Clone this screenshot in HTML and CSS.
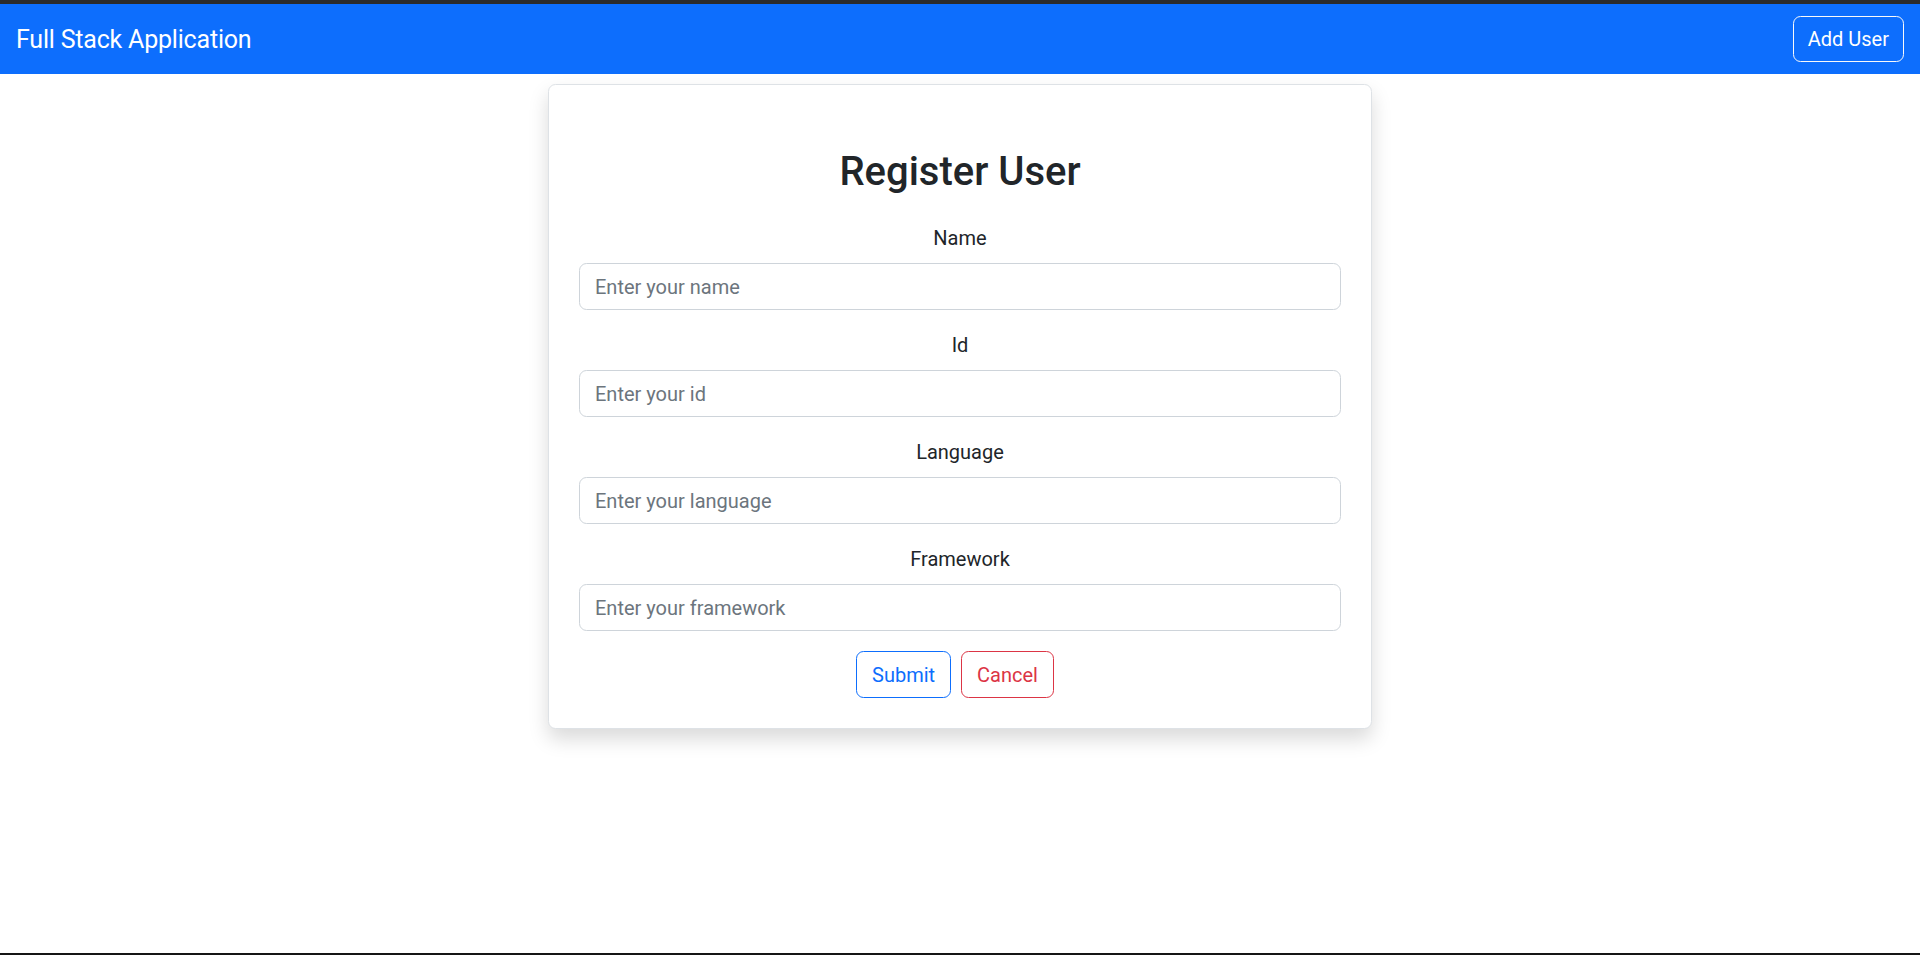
FILE: index.html
```html
<!DOCTYPE html>
<html lang="en">
<head>
<meta charset="utf-8">
<title>Full Stack Application</title>
<link rel="stylesheet" href="styles.css">
</head>
<body>
<div class="page">
  <div class="top-strip"></div>
  <nav class="navbar">
    <span class="brand">Full Stack Application</span>
    <button class="btn btn-light-outline">Add User</button>
  </nav>
  <main class="main">
    <div class="card">
      <h2 class="title">Register User</h2>
      <div class="group">
        <label class="label" for="name">Name</label>
        <input class="input" id="name" type="text" placeholder="Enter your name">
      </div>
      <div class="group">
        <label class="label" for="id">Id</label>
        <input class="input" id="id" type="text" placeholder="Enter your id">
      </div>
      <div class="group">
        <label class="label" for="language">Language</label>
        <input class="input" id="language" type="text" placeholder="Enter your language">
      </div>
      <div class="group">
        <label class="label" for="framework">Framework</label>
        <input class="input" id="framework" type="text" placeholder="Enter your framework">
      </div>
      <div class="actions">
        <button class="btn btn-primary-outline">Submit</button>
        <button class="btn btn-danger-outline cancel">Cancel</button>
      </div>
    </div>
  </main>
  <div class="bottom-strip"></div>
</div>
</body>
</html>
```
FILE: styles.css
```css
* { box-sizing: border-box; }
html, body { margin: 0; padding: 0; }
body {
  font-family: Roboto, "Liberation Sans", Arial, sans-serif;
  color: #212529;
  background: #fff;
  font-size: 20px;
  line-height: 30px;
}
.page {
  height: 955px;
  display: flex;
  flex-direction: column;
  overflow: hidden;
}
.top-strip { height: 4px; background: #2b2b2b; flex: none; }
.bottom-strip { height: 2px; background: #151515; flex: none; }
.navbar {
  flex: none;
  height: 70px;
  background: #0d6efd;
  display: flex;
  align-items: center;
  justify-content: space-between;
  padding: 0 16px;
}
.brand {
  color: #fff;
  font-size: 25px;
  line-height: 37px;
  letter-spacing: -0.2px;
}
.btn {
  font-family: inherit;
  font-size: 20px;
  line-height: 30px;
  height: 47px;
  padding: 0 15px;
  border-radius: 7.5px;
  background: transparent;
  border: 1px solid;
  cursor: pointer;
  white-space: nowrap;
}
.btn-light-outline {
  color: #fff;
  border-color: #f8f9fa;
  height: 46px;
  padding: 0 14px;
}
.main {
  flex: 1;
  display: flex;
  justify-content: center;
  align-items: flex-start;
  padding-top: 10px;
}
.card {
  width: 824px;
  border: 1px solid #dee2e6;
  border-radius: 7.5px;
  padding: 30px 30px 30px;
  box-shadow: 0 10px 20px rgba(0, 0, 0, 0.15);
  background: #fff;
}
.title {
  margin: 33px 0 27px;
  text-align: center;
  font-size: 40px;
  line-height: 48px;
  font-weight: 500;
  color: #212529;
}
.group {
  margin-bottom: 20px;
  display: flex;
  flex-direction: column;
}
.label {
  text-align: center;
  margin-bottom: 10px;
  line-height: 30px;
}
.input {
  height: 47px;
  padding: 0 15px;
  font-family: inherit;
  font-size: 20px;
  color: #212529;
  border: 1px solid #ced4da;
  border-radius: 7.5px;
  background: #fff;
  outline: none;
}
.input::placeholder { color: #6c757d; opacity: 1; }
.actions {
  display: flex;
  justify-content: center;
}
.btn-primary-outline { color: #0d6efd; border-color: #0d6efd; }
.btn-danger-outline { color: #dc3545; border-color: #dc3545; }
.cancel { margin: 0 10px; }
```
